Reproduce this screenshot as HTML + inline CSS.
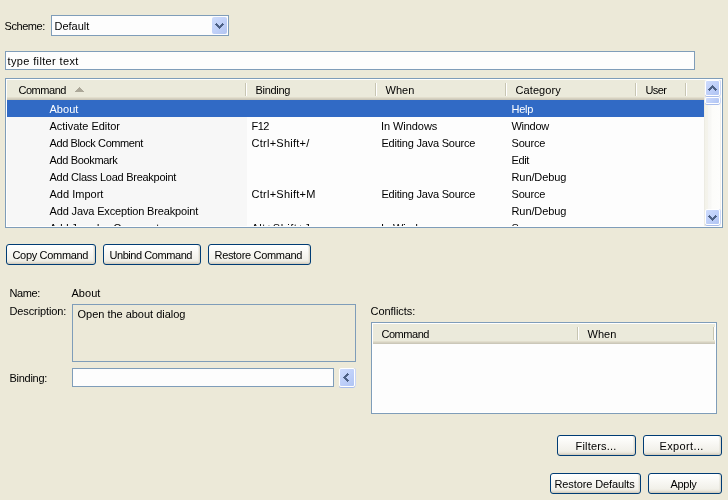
<!DOCTYPE html>
<html><head><meta charset="utf-8"><title>Keys</title>
<style>
html,body{margin:0;padding:0;}
body{width:728px;height:500px;background:#ECE9D8;position:relative;overflow:hidden;font-family:"Liberation Sans",sans-serif;font-size:11px;color:#000;line-height:13px;}
.a{position:absolute;}
.t{position:absolute;white-space:pre;height:13px;line-height:13px;}
.field{position:absolute;background:#FDFDFD;border:1px solid #7F9DB9;box-sizing:border-box;}
.tbl{position:absolute;background:#FDFDFD;border:1px solid #7F9DB9;box-sizing:border-box;overflow:hidden;}
.tbl>.in{position:absolute;left:0;top:0;right:0;bottom:0;border:1px solid #fff;}
.btn{position:absolute;box-sizing:border-box;border:1px solid #003C74;border-radius:3px;height:21px;background:linear-gradient(#FFFFFF 0,#FDFDFB 3px,#F6F5F0 10px,#F1F0E9 15px,#E8E5DA 17px,#DAD5C8 18px,#CDC7B8 19px);box-shadow:inset -1px 0 0 rgba(210,204,190,.55),inset -2px 0 0 rgba(225,221,210,.45);}
.hdr{position:absolute;background:#EBEADB;height:20px;}
.hdr:after{content:"";position:absolute;left:0;right:0;bottom:0;height:3px;background:linear-gradient(#E2DECD 0,#E2DECD 33%,#D6D2C2 33%,#D6D2C2 66%,#CBC7B8 66%);}
.sep{position:absolute;width:1px;height:13px;background:#C7C5B2;box-shadow:1px 0 0 #fff;}
.sb{box-sizing:border-box;border:1px solid #fff;border-radius:2px;background:linear-gradient(135deg,#CEDCFD 0,#BFD0F9 50%,#B0C4F3 100%);box-shadow:0 1px 0 #A9BDEB, 1px 0 0 #CBD7F5;}
</style></head><body>

<div class="field" style="left:51px;top:15px;width:178px;height:21px"></div>
<div class="a" style="left:212px;top:17px;width:15px;height:17px;border-radius:2px;background:linear-gradient(135deg,#CDDCFC 0,#C1D1F8 50%,#B2C4F0 100%)"></div>
<svg class="a" style="left:215px;top:23px" width="9" height="6" viewBox="0 0 9 6" shape-rendering="crispEdges" fill="#4D6185"><rect x="1" y="0" width="1" height="1"/><rect x="7" y="0" width="1" height="1"/><rect x="0" y="1" width="3" height="1"/><rect x="6" y="1" width="3" height="1"/><rect x="1" y="2" width="3" height="1"/><rect x="5" y="2" width="3" height="1"/><rect x="2" y="3" width="5" height="1"/><rect x="3" y="4" width="3" height="1"/><rect x="4" y="5" width="1" height="1"/></svg>
<div class="field" style="left:5px;top:51px;width:690px;height:19px"></div>
<div class="tbl" style="left:5px;top:78px;width:718px;height:150px"><div class="in"></div></div>
<div class="a" style="left:7px;top:100px;width:240px;height:126px;background:#F7F7F7"></div>
<div class="hdr" style="left:7px;top:80px;width:697px"></div>
<div class="sep" style="left:245px;top:83px"></div>
<div class="sep" style="left:375px;top:83px"></div>
<div class="sep" style="left:505px;top:83px"></div>
<div class="sep" style="left:635px;top:83px"></div>
<div class="sep" style="left:685px;top:83px"></div>
<svg class="a" style="left:75px;top:87px" width="9" height="5" viewBox="0 0 9 5" shape-rendering="crispEdges" fill="#ACA899"><rect x="4" y="0" width="1" height="1"/><rect x="3" y="1" width="3" height="1"/><rect x="2" y="2" width="5" height="1"/><rect x="1" y="3" width="7" height="1"/><rect x="0" y="4" width="9" height="1"/></svg>
<div class="a" style="left:7px;top:100px;width:697px;height:17px;background:#316AC5"></div>
<div class="a" style="left:704px;top:80px;width:17px;height:146px;background:linear-gradient(90deg,#ECEBE3 0,#ECEBE3 1px,#F3F2E9 1px,#F4F3EC 4px,#F6F6F3 4px,#F8F8F6 7px,#FCFCFA 8px,#FDFDFC 16px,#F1F0EB 16px,#F1F0EB 17px)"></div>
<div class="a sb" style="left:705px;top:80px;width:15px;height:16px"></div>
<svg class="a" style="left:708px;top:85px" width="9" height="6" viewBox="0 0 9 6" shape-rendering="crispEdges" fill="#4D6185"><rect x="4" y="0" width="1" height="1"/><rect x="3" y="1" width="3" height="1"/><rect x="2" y="2" width="5" height="1"/><rect x="1" y="3" width="3" height="1"/><rect x="5" y="3" width="3" height="1"/><rect x="0" y="4" width="3" height="1"/><rect x="6" y="4" width="3" height="1"/><rect x="1" y="5" width="1" height="1"/><rect x="7" y="5" width="1" height="1"/></svg>
<div class="a sb" style="left:705px;top:97px;width:15px;height:7px"></div>
<div class="a sb" style="left:705px;top:209px;width:15px;height:16px"></div>
<svg class="a" style="left:708px;top:215px" width="9" height="6" viewBox="0 0 9 6" shape-rendering="crispEdges" fill="#4D6185"><rect x="1" y="0" width="1" height="1"/><rect x="7" y="0" width="1" height="1"/><rect x="0" y="1" width="3" height="1"/><rect x="6" y="1" width="3" height="1"/><rect x="1" y="2" width="3" height="1"/><rect x="5" y="2" width="3" height="1"/><rect x="2" y="3" width="5" height="1"/><rect x="3" y="4" width="3" height="1"/><rect x="4" y="5" width="1" height="1"/></svg>
<div class="btn" style="left:6px;top:244px;width:90px"></div>
<div class="btn" style="left:103px;top:244px;width:98px"></div>
<div class="btn" style="left:208px;top:244px;width:103px"></div>
<div class="btn" style="left:557px;top:435px;width:79px"></div>
<div class="btn" style="left:643px;top:435px;width:79px"></div>
<div class="btn" style="left:550px;top:473px;width:91px"></div>
<div class="btn" style="left:648px;top:473px;width:74px"></div>
<div class="field" style="left:72px;top:304px;width:284px;height:58px;background:#ECE9D8"></div>
<div class="field" style="left:72px;top:368px;width:262px;height:19px"></div>
<div class="a sb" style="left:339px;top:368px;width:16px;height:19px"></div>
<svg class="a" style="left:343px;top:373px" width="6" height="9" viewBox="0 0 6 9" shape-rendering="crispEdges" fill="#4D6185"><rect x="4" y="0" width="1" height="1"/><rect x="3" y="1" width="3" height="1"/><rect x="2" y="2" width="3" height="1"/><rect x="1" y="3" width="3" height="1"/><rect x="0" y="4" width="3" height="1"/><rect x="1" y="5" width="3" height="1"/><rect x="2" y="6" width="3" height="1"/><rect x="3" y="7" width="3" height="1"/><rect x="4" y="8" width="1" height="1"/></svg>
<div class="tbl" style="left:371px;top:322px;width:346px;height:92px"><div class="in"></div></div>
<div class="hdr" style="left:373px;top:324px;width:342px"></div>
<div class="sep" style="left:577px;top:327px"></div>
<div class="sep" style="left:713px;top:327px"></div>
<div class="a" style="left:0;top:0;width:728px;height:500px;will-change:transform">
<div class="t" style="left:4.50px;top:20px;letter-spacing:-0.426px">Scheme:</div>
<div class="t" style="left:54.50px;top:20px;letter-spacing:0.001px">Default</div>
<div class="t" style="left:7.50px;top:55px;letter-spacing:0.363px">type filter text</div>
<div class="t" style="left:18.50px;top:84px;letter-spacing:-0.471px">Command</div>
<div class="t" style="left:255.50px;top:84px;letter-spacing:-0.296px">Binding</div>
<div class="t" style="left:385.50px;top:84px;letter-spacing:0.061px">When</div>
<div class="t" style="left:515.50px;top:84px;letter-spacing:0.095px">Category</div>
<div class="t" style="left:645.50px;top:84px;letter-spacing:-0.587px">User</div>
<div class="t" style="left:49.50px;top:103px;letter-spacing:0.028px;color:#fff">About</div>
<div class="t" style="left:511.50px;top:103px;letter-spacing:-0.235px;color:#fff">Help</div>
<div class="t" style="left:49.50px;top:120px;letter-spacing:-0.033px">Activate Editor</div>
<div class="t" style="left:251.50px;top:120px;letter-spacing:-0.518px">F12</div>
<div class="t" style="left:381.00px;top:120px;letter-spacing:-0.061px">In Windows</div>
<div class="t" style="left:511.50px;top:120px;letter-spacing:-0.276px">Window</div>
<div class="t" style="left:49.50px;top:137px;letter-spacing:-0.400px">Add Block Comment</div>
<div class="t" style="left:251.50px;top:137px;letter-spacing:0.258px">Ctrl+Shift+/</div>
<div class="t" style="left:381.50px;top:137px;letter-spacing:-0.218px">Editing Java Source</div>
<div class="t" style="left:511.50px;top:137px;letter-spacing:-0.187px">Source</div>
<div class="t" style="left:49.50px;top:154px;letter-spacing:-0.350px">Add Bookmark</div>
<div class="t" style="left:511.50px;top:154px;letter-spacing:-0.366px">Edit</div>
<div class="t" style="left:49.50px;top:171px;letter-spacing:-0.269px">Add Class Load Breakpoint</div>
<div class="t" style="left:511.50px;top:171px;letter-spacing:-0.092px">Run/Debug</div>
<div class="t" style="left:49.50px;top:188px;letter-spacing:0.006px">Add Import</div>
<div class="t" style="left:251.50px;top:188px;letter-spacing:0.258px">Ctrl+Shift+M</div>
<div class="t" style="left:381.50px;top:188px;letter-spacing:-0.218px">Editing Java Source</div>
<div class="t" style="left:511.50px;top:188px;letter-spacing:-0.187px">Source</div>
<div class="t" style="left:49.50px;top:205px;letter-spacing:-0.143px">Add Java Exception Breakpoint</div>
<div class="t" style="left:511.50px;top:205px;letter-spacing:-0.092px">Run/Debug</div>
<div class="t" style="left:49.50px;top:222px;letter-spacing:-0.249px">Add Javadoc Comment</div>
<div class="t" style="left:251.50px;top:222px;letter-spacing:0.510px">Alt+Shift+J</div>
<div class="t" style="left:381.00px;top:222px;letter-spacing:-0.061px">In Windows</div>
<div class="t" style="left:511.50px;top:222px;letter-spacing:-0.187px">Source</div>
<div class="t" style="left:9.50px;top:287px;letter-spacing:-0.386px">Name:</div>
<div class="t" style="left:71.50px;top:287px;letter-spacing:0.028px">About</div>
<div class="t" style="left:9.50px;top:305px;letter-spacing:-0.111px">Description:</div>
<div class="t" style="left:77.50px;top:308px;letter-spacing:-0.017px">Open the about dialog</div>
<div class="t" style="left:9.50px;top:372px;letter-spacing:-0.271px">Binding:</div>
<div class="t" style="left:370.50px;top:305px;letter-spacing:-0.042px">Conflicts:</div>
<div class="t" style="left:381.50px;top:328px;letter-spacing:-0.471px">Command</div>
<div class="t" style="left:587.50px;top:328px;letter-spacing:0.061px">When</div>
<div class="t" style="left:12.50px;top:249px;letter-spacing:-0.323px">Copy Command</div>
<div class="t" style="left:109.50px;top:249px;letter-spacing:-0.441px">Unbind Command</div>
<div class="t" style="left:214.50px;top:249px;letter-spacing:-0.314px">Restore Command</div>
<div class="t" style="left:575.50px;top:440px;letter-spacing:0.194px">Filters...</div>
<div class="t" style="left:659.50px;top:440px;letter-spacing:0.362px">Export...</div>
<div class="t" style="left:554.50px;top:478px;letter-spacing:-0.108px">Restore Defaults</div>
<div class="t" style="left:670.50px;top:478px;letter-spacing:-0.304px">Apply</div>
</div>
<div class="a" style="left:6px;top:226px;width:716px;height:1px;background:#fff"></div>
<div class="a" style="left:5px;top:227px;width:718px;height:1px;background:#7F9DB9"></div>
<div class="a" style="left:5px;top:228px;width:718px;height:8px;background:#ECE9D8"></div>
</body></html>
